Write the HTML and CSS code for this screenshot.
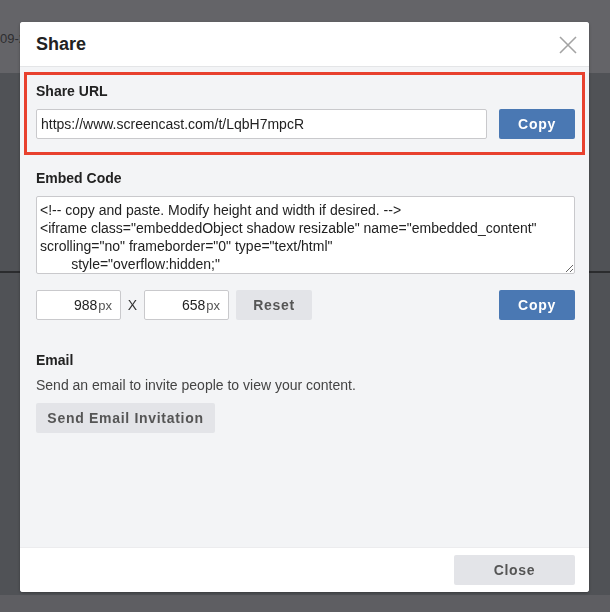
FILE: index.html
```html
<!DOCTYPE html>
<html lang="en">
<head>
    <meta charset="UTF-8">
    <title>Share</title>
    <link rel="stylesheet" href="styles.css">
</head>
<body>
    <div class="page-top">
        <span class="page-date">09-2</span>
    </div>
    <div class="page-main">
        <div class="page-rule"></div>
    </div>

    <div class="modal">
        <div class="modal-header">
            <div class="modal-title">Share</div>
            <svg class="modal-close" width="20" height="20" viewBox="0 0 20 20">
                <path d="M2 2 L18 18 M18 2 L2 18" stroke="#a3a3a3" stroke-width="1.6" fill="none"/>
            </svg>
        </div>
        <div class="modal-body">
            <div class="section section-url">
                <div class="label">Share URL</div>
                <div class="url-row">
                    <input type="text" class="url-input" value="https://www.screencast.com/t/LqbH7mpcR">
                    <button class="btn btn-blue">Copy</button>
                </div>
            </div>
            <div class="section">
                <div class="label">Embed Code</div>
                <textarea class="embed-code">&lt;!-- copy and paste. Modify height and width if desired. --&gt;
&lt;iframe class="embeddedObject shadow resizable" name="embedded_content"
scrolling="no" frameborder="0" type="text/html"
        style="overflow:hidden;"</textarea>
                <div class="size-row">
                    <div class="size-box"><span class="size-num">988</span><span class="size-unit">px</span></div>
                    <span class="size-x">X</span>
                    <div class="size-box"><span class="size-num">658</span><span class="size-unit">px</span></div>
                    <button class="btn btn-gray btn-reset">Reset</button>
                    <button class="btn btn-blue btn-right">Copy</button>
                </div>
                <div class="label label-email">Email</div>
                <p class="hint">Send an email to invite people to view your content.</p>
                <button class="btn btn-gray btn-invite">Send Email Invitation</button>
            </div>
        </div>
        <div class="modal-footer">
            <button class="btn btn-gray btn-close">Close</button>
        </div>
    </div>
</body>
</html>
```

FILE: styles.css
```css
body {
    margin: 0;
    padding: 0;
    background-color: #5e5e62;
    font-family: "Liberation Sans", Arial, sans-serif;
    height: 612px;
    overflow: hidden;
}
/* page behind the dialog */
.page-top {
    height: 73px;
    background-color: #646468;
    padding-top: 31px;
    box-sizing: border-box;
}
.page-date {
    display: block;
    margin-left: 0;
    font-size: 13px;
    color: #2e2e30;
}
.page-main {
    height: 522px;
    background-color: #505256;
    padding-top: 198px;
    box-sizing: border-box;
}
.page-rule {
    height: 2px;
    background-color: #2b2c2e;
}
/* dialog */
.modal {
    position: fixed;
    left: 20px;
    top: 22px;
    width: 569px;
    height: 570px;
    background-color: #f3f4f6;
    border-radius: 3px;
    display: flex;
    flex-direction: column;
    overflow: hidden;
    box-shadow: 0 1px 3px rgba(0, 0, 0, 0.3);
}
.modal-header {
    height: 45px;
    box-sizing: border-box;
    background-color: #fff;
    border-bottom: 1px solid #e4e5e7;
    display: flex;
    align-items: center;
    justify-content: space-between;
    padding: 0 11px 0 16px;
}
.modal-title {
    font-size: 18px;
    font-weight: bold;
    color: #222;
}
.modal-close {
    display: block;
    margin-top: 1px;
}
.modal-body {
    flex: 1;
    padding: 5px 4px 0;
}
.section {
    border: 3px solid transparent;
    padding: 12px 7px 0 9px;
}
.section-url {
    border-color: #e8412e;
    padding: 8px 7px 13px 9px;
}
.label {
    font-size: 14px;
    line-height: 16px;
    font-weight: bold;
    color: #222;
    margin-bottom: 10px;
}
.url-row {
    display: flex;
    gap: 12px;
}
.url-input {
    flex: 1;
    height: 30px;
    box-sizing: border-box;
    border: 1px solid #c9c9cc;
    border-radius: 2px;
    padding: 0 4px;
    font-family: "Liberation Sans", Arial, sans-serif;
    font-size: 14px;
    color: #222;
    background-color: #fff;
}
.btn {
    height: 30px;
    border: none;
    border-radius: 2px;
    font-family: "Liberation Sans", Arial, sans-serif;
    font-size: 14px;
    font-weight: bold;
    letter-spacing: 0.7px;
    cursor: pointer;
    padding: 0;
}
.btn-blue {
    width: 76px;
    background-color: #4a78b3;
    color: #fff;
}
.btn-gray {
    background-color: #e3e4e8;
    color: #555;
}
.embed-code {
    display: block;
    width: 100%;
    height: 78px;
    box-sizing: border-box;
    border: 1px solid #c9c9cc;
    border-radius: 2px;
    padding: 4px 3px;
    font-family: "Liberation Sans", Arial, sans-serif;
    font-size: 14px;
    line-height: 18px;
    color: #222;
    background-color: #fff;
    resize: vertical;
    overflow: hidden;
}
.size-row {
    display: flex;
    align-items: center;
    margin-top: 16px;
}
.size-box {
    width: 85px;
    height: 30px;
    box-sizing: border-box;
    border: 1px solid #c9c9cc;
    border-radius: 2px;
    background-color: #fff;
    display: flex;
    align-items: center;
    justify-content: flex-end;
    padding-right: 8px;
}
.size-num {
    font-size: 14px;
    color: #222;
}
.size-unit {
    font-size: 13px;
    color: #555;
    margin-left: 1px;
}
.size-x {
    width: 23px;
    text-align: center;
    font-size: 14px;
    color: #333;
}
.btn-reset {
    width: 76px;
    margin-left: 7px;
}
.btn-right {
    margin-left: auto;
}
.label-email {
    margin-top: 32px;
    margin-bottom: 9px;
}
.hint {
    margin: 0 0 10px;
    font-size: 14px;
    line-height: 16px;
    color: #444;
}
.btn-invite {
    width: 179px;
}
.modal-footer {
    height: 45px;
    box-sizing: border-box;
    background-color: #fff;
    border-top: 1px solid #ececee;
    display: flex;
    justify-content: flex-end;
    padding: 7px 14px 0;
}
.btn-close {
    width: 121px;
}
```
